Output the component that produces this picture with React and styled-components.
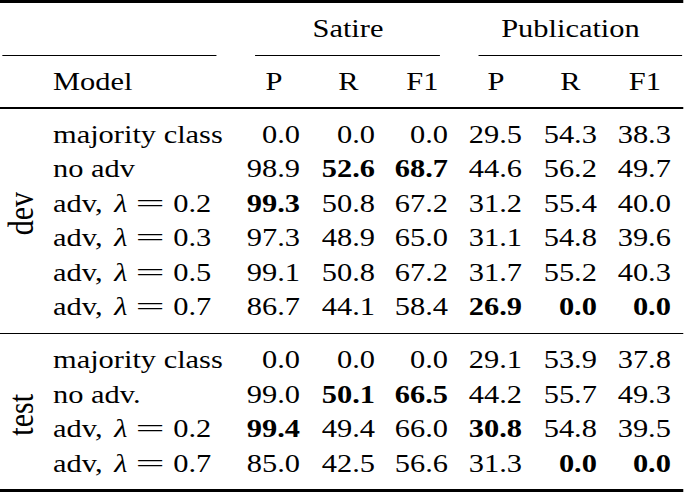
import React from 'react';
import styled, { createGlobalStyle } from 'styled-components';

// the table in the picture is stretched sideways, so it is laid out narrow and scaled
const S = 1.17;
const u = (px) => `${px / S}px`;

const COLS = [42, 195, 74, 75, 73, 74, 75, 74];
const GRID = COLS.map(u).join(' ');

const GlobalStyle = createGlobalStyle`
  html, body {
    margin: 0;
    padding: 0;
    background: #fff;
  }
  body {
    font-family: 'Liberation Serif', 'Times New Roman', serif;
    color: #000;
  }
`;

const TableWrap = styled.div`
  width: ${u(683)};
  transform: scaleX(${S});
  transform-origin: 0 0;
  font-size: 26px;
  line-height: 34.5px;
`;

const Rule = styled.div`
  height: ${(p) => (p.$heavy ? '3px' : '1.5px')};
  background: #000;
`;

const Section = styled.div`
  display: grid;
  grid-template-columns: ${GRID};
  padding: 9px 0 8px;
`;

const CmidRow = styled.div`
  display: grid;
  grid-template-columns: ${GRID};
`;

const Cmid = styled.div`
  grid-column: ${(p) => p.$span};
  height: 1px;
  background: #000;
  margin-left: ${(p) => u(p.$l)};
  margin-right: ${(p) => u(p.$r)};
`;

const GroupHead = styled.div`
  grid-column: ${(p) => p.$span};
  text-align: center;
`;

const ColHead = styled.div`
  text-align: center;
`;

const ModelCell = styled.div`
  grid-column: 2;
  padding-left: ${u(11)};
  white-space: nowrap;
`;

const Num = styled.div`
  text-align: right;
  padding-right: ${u(11)};
  font-weight: ${(p) => (p.$bold ? 700 : 400)};
`;

const SideLabel = styled.div`
  grid-column: 1;
  grid-row: 1 / span ${(p) => p.$rows};
  display: flex;
  align-items: center;
  justify-content: center;
  span {
    writing-mode: vertical-rl;
    transform: rotate(180deg);
    font-size: 30px;
    line-height: 1;
    margin-top: ${(p) => p.$shift || 0}px;
  }
`;

const Lambda = styled.i`
  font-style: italic;
  margin-left: ${u(4)};
`;

const Eq = styled.span`
  display: inline-block;
  width: ${u(46)};
  text-align: center;
  span {
    display: inline-block;
    transform: scaleX(1.7);
  }
`;

const dev = [
  { name: 'majority class', v: ['0.0', '0.0', '0.0', '29.5', '54.3', '38.3'], b: [] },
  { name: 'no adv', v: ['98.9', '52.6', '68.7', '44.6', '56.2', '49.7'], b: [1, 2] },
  { lam: '0.2', v: ['99.3', '50.8', '67.2', '31.2', '55.4', '40.0'], b: [0] },
  { lam: '0.3', v: ['97.3', '48.9', '65.0', '31.1', '54.8', '39.6'], b: [] },
  { lam: '0.5', v: ['99.1', '50.8', '67.2', '31.7', '55.2', '40.3'], b: [] },
  { lam: '0.7', v: ['86.7', '44.1', '58.4', '26.9', '0.0', '0.0'], b: [3, 4, 5] },
];

const test = [
  { name: 'majority class', v: ['0.0', '0.0', '0.0', '29.1', '53.9', '37.8'], b: [] },
  { name: 'no adv.', v: ['99.0', '50.1', '66.5', '44.2', '55.7', '49.3'], b: [1, 2] },
  { lam: '0.2', v: ['99.4', '49.4', '66.0', '30.8', '54.8', '39.5'], b: [0, 3] },
  { lam: '0.7', v: ['85.0', '42.5', '56.6', '31.3', '0.0', '0.0'], b: [4, 5] },
];

function Group({ label, rows, shift }) {
  return (
    <Section>
      <SideLabel $rows={rows.length} $shift={shift}>
        <span>{label}</span>
      </SideLabel>
      {rows.map((r, i) => (
        <React.Fragment key={i}>
          <ModelCell>
            {r.lam ? (
              <>
                adv, <Lambda>λ</Lambda>
                <Eq>
                  <span>=</span>
                </Eq>
                {r.lam}
              </>
            ) : (
              r.name
            )}
          </ModelCell>
          {r.v.map((val, j) => (
            <Num key={j} $bold={r.b.includes(j)}>
              {val}
            </Num>
          ))}
        </React.Fragment>
      ))}
    </Section>
  );
}

export default function App() {
  return (
    <>
      <GlobalStyle />
      <TableWrap>
        <Rule $heavy />
        <Section>
          <GroupHead $span="3 / 6">Satire</GroupHead>
          <GroupHead $span="6 / 9">Publication</GroupHead>
        </Section>
        <CmidRow>
          <Cmid $span="1 / 3" $l={2} $r={20} />
          <Cmid $span="3 / 6" $l={18} $r={19} />
          <Cmid $span="6 / 9" $l={19} $r={0} />
        </CmidRow>
        <Section>
          <ModelCell>Model</ModelCell>
          {['P', 'R', 'F1', 'P', 'R', 'F1'].map((h, i) => (
            <ColHead key={i}>{h}</ColHead>
          ))}
        </Section>
        <Rule />
        <Group label="dev" rows={dev} shift={-15} />
        <Rule />
        <Group label="test" rows={test} shift={5} />
        <Rule $heavy />
      </TableWrap>
    </>
  );
}
